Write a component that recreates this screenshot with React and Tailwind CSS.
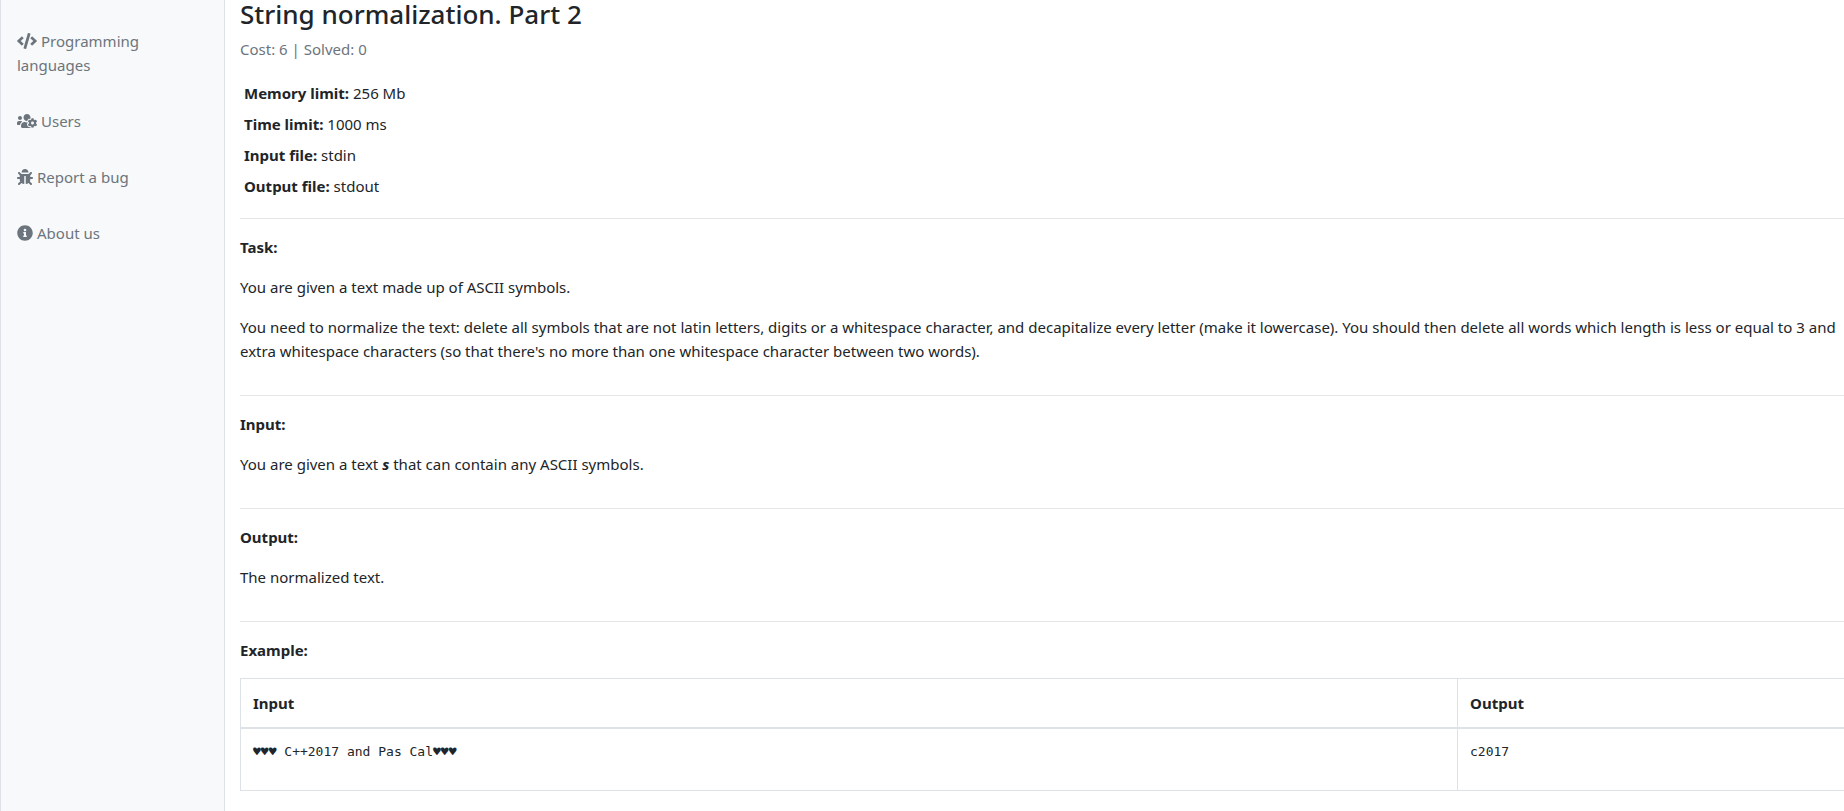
import React from "react";
import { FaCode, FaUsersCog, FaBug, FaInfoCircle } from "react-icons/fa";

const NAV = [
  { label: "Programming languages", Icon: FaCode, size: "w-5 h-4" },
  { label: "Users", Icon: FaUsersCog, size: "w-5 h-4" },
  { label: "Report a bug", Icon: FaBug, size: "w-4 h-4" },
  { label: "About us", Icon: FaInfoCircle, size: "w-4 h-4" },
];

const LIMITS = [
  ["Memory limit:", "256 Mb"],
  ["Time limit:", "1000 ms"],
  ["Input file:", "stdin"],
  ["Output file:", "stdout"],
];

function Section({ title, children }) {
  return (
    <section className="border-t border-[#e5e5e5] pt-4">
      <h2 className="mb-4 font-bold">{title}</h2>
      {children}
    </section>
  );
}

export default function App() {
  return (
    <div className="flex min-h-screen bg-white font-['Noto_Sans','Open_Sans',sans-serif] text-[15px] leading-6 text-[#212529]">
      <aside className="w-[225px] shrink-0 border-x border-[#dee2e6] bg-[#f8f9fa] pt-[13px]">
        <nav>
          {NAV.map(({ label, Icon, size }) => (
            <a key={label} href="#" className="block p-4 text-[#6c757d]">
              <Icon className={`mr-1 -mt-1 inline-block align-middle ${size}`} />
              {label}
            </a>
          ))}
        </nav>
      </aside>
      <main className="min-w-0 flex-1 pl-[15px]">
        <h1 className="mb-2 text-[26px] leading-[29px] font-medium">String normalization. Part 2</h1>
        <p className="mb-[17px] text-[#6c757d]">Cost: 6 | Solved: 0</p>
        <ul className="mb-4 pl-1 leading-[31px]">
          {LIMITS.map(([name, value]) => (
            <li key={name}>
              <b>{name}</b> {value}
            </li>
          ))}
        </ul>
        <Section title="Task:">
          <p className="mb-4">You are given a text made up of ASCII symbols.</p>
          <p className="mb-8">
            You need to normalize the text: delete all symbols that are not latin letters, digits or a whitespace
            character, and decapitalize every letter (make it lowercase). You should then delete all words which length
            is less or equal to 3 and extra whitespace characters (so that there's no more than one whitespace character
            between two words).
          </p>
        </Section>
        <Section title="Input:">
          <p className="mb-8">
            You are given a text <b><i>s</i></b> that can contain any ASCII symbols.
          </p>
        </Section>
        <Section title="Output:">
          <p className="mb-8">The normalized text.</p>
        </Section>
        <Section title="Example:">
          <table className="w-full table-fixed border-collapse border-y border-l border-[#dee2e6] text-left">
            <colgroup>
              <col className="w-[75.9%]" />
              <col />
            </colgroup>
            <thead>
              <tr className="border-b-2 border-[#dee2e6]">
                <th className="border-r border-[#dee2e6] p-3 font-bold">Input</th>
                <th className="p-3 font-bold">Output</th>
              </tr>
            </thead>
            <tbody className="font-['DejaVu_Sans_Mono',monospace] text-[13px] leading-[21px]">
              <tr>
                <td className="border-r border-[#dee2e6] px-3 pt-3 pb-7">♥♥♥ C++2017 and Pas Cal♥♥♥</td>
                <td className="px-3 pt-3 pb-7">c2017</td>
              </tr>
            </tbody>
          </table>
        </Section>
      </main>
    </div>
  );
}
